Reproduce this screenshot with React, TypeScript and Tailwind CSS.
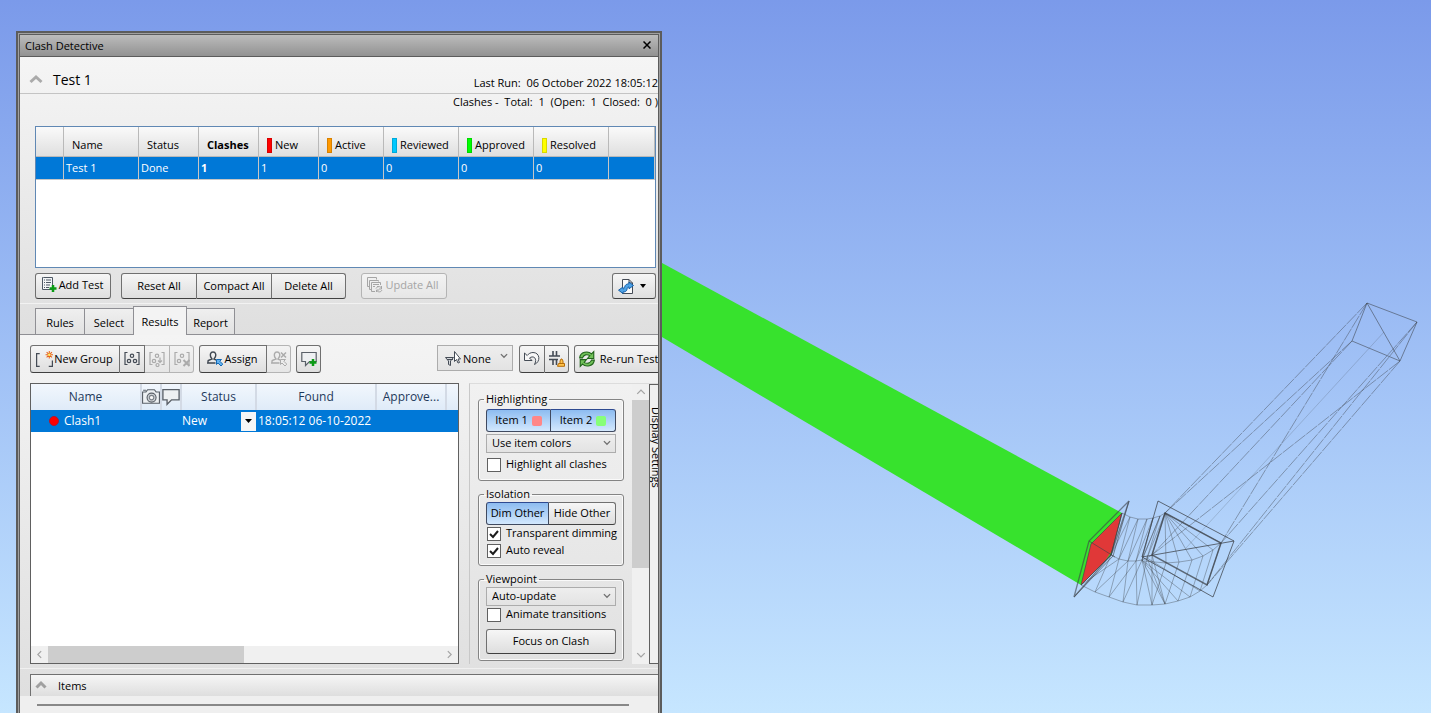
import type { ReactNode } from "react";

type Point = [number, number];

const buttonLook =
  "flex shrink-0 items-center justify-center border-[#707070] border-b-[#404040] bg-linear-to-b from-[#f6f6f6] to-[#dedede] whitespace-nowrap";
const disabledLook =
  "flex shrink-0 items-center justify-center border-[#b4b4b4] bg-linear-to-b from-[#f3f3f3] to-[#e6e6e6] whitespace-nowrap text-[#a5a5a5]";
const pressedLook =
  "flex items-center justify-center border-[#404a60] border-t-[#2f4a90] bg-linear-to-b from-[#8dbcf0] to-[#d3e8fd] whitespace-nowrap";

const testColumns = [
  { name: "", value: "", width: "w-[28px]" },
  { name: "Name", value: "Test 1", width: "w-[75px]" },
  { name: "Status", value: "Done", width: "w-[60px]" },
  { name: "Clashes", value: "1", width: "w-[60px]", bold: true },
  { name: "New", value: "1", width: "w-[60px]", chip: "bg-[#ff0000]" },
  { name: "Active", value: "0", width: "w-[65px]", chip: "bg-[#ff9900]" },
  { name: "Reviewed", value: "0", width: "w-[75px]", chip: "bg-[#00c8ff]" },
  { name: "Approved", value: "0", width: "w-[75px]", chip: "bg-[#00ff00]" },
  { name: "Resolved", value: "0", width: "w-[75px]", chip: "bg-[#ffff00]" },
  { name: "", value: "" },
];

const ductFar: Point[] = [[1367, 303], [1417, 322], [1400, 361], [1352, 341]];
const ductNear: Point[] = [[1165, 513], [1221, 543], [1207, 585], [1152, 555]];
const flangeNear: Point[] = [[1158, 501], [1234, 541], [1213, 597], [1142, 557]];
const ductEdges: [Point, Point][] = [
  [[1367, 303], [1165, 513]],
  [[1352, 341], [1165, 513]],
  [[1352, 341], [1152, 555]],
  [[1367, 303], [1221, 543]],
  [[1400, 361], [1152, 555]],
  [[1417, 322], [1221, 543]],
  [[1417, 322], [1207, 585]],
  [[1400, 361], [1207, 585]],
];
const elbowTop: Point[] = [[1122, 513], [1130, 517], [1138, 519], [1147, 519], [1153, 518], [1160, 516], [1165, 513]];
const elbowInner: Point[] = [[1111, 555], [1119, 559], [1128, 561], [1136, 561], [1142, 560], [1147, 558], [1152, 555]];
const elbowBottom: Point[] = [
  [1081, 585], [1095, 592], [1109, 597], [1123, 602], [1137, 605], [1152, 605],
  [1165, 604], [1178, 601], [1190, 597], [1200, 591], [1207, 585],
];
const elbowRight: Point[] = [[1144, 561], [1166, 563], [1179, 562], [1192, 560], [1203, 556], [1213, 550], [1221, 543]];

const toPoints = (points: Point[]) => points.map((p) => p.join(",")).join(" ");

function Scene() {
  return (
    <svg
      className="absolute inset-0 h-full w-full"
      viewBox="0 0 1431 713"
      preserveAspectRatio="xMidYMid slice"
      fill="none"
      stroke="#3c4148"
      aria-hidden="true"
    >
      <polygon points="640,251 1122,513 1111,555 1081,585 640,324" fill="#37e22d" stroke="none" />
      <polygon points="1122,513 1112,551 1105,561 1081,585 1091,544" fill="#e03838" stroke="none" />
      <g strokeOpacity="0.6">
        <polygon points="1129,501 1089,541 1074,597 1111,555" strokeWidth="1.3" />
        <polygon points="1122,513 1091,544 1081,585 1111,555" />
        <path d="M1089 541 1115 557M1129 501 1113 556 1074 597" />
      </g>
      <g strokeOpacity="0.38">
        <polyline points={toPoints(elbowTop)} />
        <polyline points={toPoints(elbowInner)} />
        <polyline points={toPoints(elbowBottom)} />
        <polyline points={toPoints(elbowRight)} />
        {elbowTop.map(([x, y], i) => (
          <path
            key={x}
            d={`M${elbowInner[i].join(" ")}L${x} ${y}L${elbowInner[Math.max(i - 1, 0)].join(" ")}`}
          />
        ))}
        {elbowBottom.slice(0, 7).map(([x, y], i) => (
          <path
            key={x}
            d={`M${elbowInner[Math.max(i - 1, 0)].join(" ")}L${x} ${y}L${elbowInner[Math.min(i + 1, 6)].join(" ")}`}
          />
        ))}
        {elbowRight.slice(1).map(([x, y], i) => (
          <path key={x} d={`M1165 513L${x} ${y}L${elbowBottom[i + 5].join(" ")}`} />
        ))}
        <path d="M1142 560 1165 604M1142 560 1178 601M1142 560 1190 597M1147 558 1200 591M1160 516 1142 560M1153 518 1142 557" />
      </g>
      <g strokeOpacity="0.75">
        <polygon points={toPoints(flangeNear)} />
        <polygon points={toPoints(ductNear)} strokeWidth="1.5" />
        <path d="M1142 557 1234 541" />
      </g>
      <g strokeOpacity="0.55">
        <polygon points={toPoints(ductFar)} />
        <path d="M1367 303 1400 361" />
      </g>
      <g strokeOpacity="0.42">
        {ductEdges.map(([a, b], i) => (
          <path key={i} d={`M${a.join(" ")}L${b.join(" ")}`} strokeDasharray="14 1" />
        ))}
        <path d="M1384 332 1186 548" strokeOpacity="0.2" />
      </g>
    </svg>
  );
}

function Icon({ children, className = "size-4" }: { children: ReactNode; className?: string }) {
  return (
    <svg className={`${className} shrink-0`} viewBox="0 0 16 16" fill="none" stroke="#444b55" aria-hidden="true">
      {children}
    </svg>
  );
}

function BracketDots({ faded = false, children }: { faded?: boolean; children?: ReactNode }) {
  return (
    <Icon>
      <g stroke={faded ? "#ababab" : "#444b55"} strokeWidth="1.200">
        <path d="M3.500 1.500H1V13.500H3.500M12.500 1.500H15V13.500H12.500" />
        <circle cx="8" cy="4.800" r="1.700" />
        <circle cx="5" cy="10" r="1.700" />
        {children ?? <circle cx="11" cy="10" r="1.700" />}
      </g>
    </Icon>
  );
}

function AssignIcon({ faded = false }: { faded?: boolean }) {
  return (
    <Icon>
      <path
        d="M6 1C3.200 1 3 4 3.800 6.200L5 8 1.200 9.500 .8 12H8.500M6 1C9 1 9.200 4.200 8.200 6.200L7 8 9 9"
        stroke={faded ? "#ababab" : "#3e4650"}
        strokeWidth="1.400"
      />
      {faded && <path d="M10 1.500l5 5M15 1.500l-5 5" stroke="#ababab" strokeWidth="1.500" />}
      <path
        d="M9.500 8.500H14.500L12.800 10.200 15.800 13.200 14 15 11 12 9.500 13.500Z"
        fill={faded ? "#ececec" : "#62b2f0"}
        stroke={faded ? "#ababab" : "#1469b4"}
      />
    </Icon>
  );
}

function CommentShape() {
  return <path d="M.8 1.500H15.200V10.500H8.500L4.500 14.500V10.500H.8Z" fill="#eef0f2" stroke="#5a6068" strokeWidth="1.200" />;
}

function PlusBadge() {
  return <path d="M12 8v7M8.500 11.500h7" stroke="#0a9a14" strokeWidth="2.500" />;
}

function Chevron({ className, d = "M4 6l4 4 4-4", weight = 2 }: { className: string; d?: string; weight?: number }) {
  return (
    <svg className={className} viewBox="0 0 16 16" fill="none" stroke="#707070" strokeWidth={weight} aria-hidden="true">
      <path d={d} />
    </svg>
  );
}

function Combo({ label, value }: { label: string; value: string }) {
  return (
    <div className="relative">
      <select
        aria-label={label}
        className="block h-[19px] w-full appearance-none border border-[#acacac] bg-linear-to-b from-[#eeeeee] to-[#e3e3e3] pl-[5px]"
      >
        <option>{value}</option>
      </select>
      <Chevron className="pointer-events-none absolute top-1 right-1 size-[10px]" d="M3 5l5 5 5-5" />
    </div>
  );
}

function Check({ label, checked = false }: { label: string; checked?: boolean }) {
  return (
    <label className="flex h-[17px] items-center gap-[5px] whitespace-nowrap">
      <span className="relative ml-px size-[14px] shrink-0">
        <input
          type="checkbox"
          defaultChecked={checked}
          className="peer block size-[14px] appearance-none border border-[#606060] bg-white"
        />
        <svg
          className="pointer-events-none absolute inset-0 hidden peer-checked:block"
          viewBox="0 0 14 14"
          fill="none"
          stroke="#1c1c1c"
          strokeWidth="2"
          aria-hidden="true"
        >
          <path d="M3 7l3 3 5-6" />
        </svg>
      </span>
      {label}
    </label>
  );
}

function Group({ title, children }: { title: string; children: ReactNode }) {
  return (
    <fieldset className="min-w-0 rounded-[3px] border border-[#848484] px-[7px] pb-1.5 shadow-[inset_0_0_0_1px_#fafafa]">
      <legend className="-ml-0.5 h-4 px-0.5 leading-4">{title}</legend>
      {children}
    </fieldset>
  );
}

function TestSummary() {
  return (
    <>
      <header className="flex h-[37px] items-center justify-between border-b border-[#c4c4c4] pl-2">
        <div className="flex items-center gap-[9px] pt-2">
          <Chevron className="size-4 opacity-55" d="M2.500 11l5.500-5 5.500 5" weight={3} />
          <h1 className="text-[14px]">Test 1</h1>
        </div>
        <p className="mt-4 whitespace-pre">Last Run:  06 October 2022 18:05:12</p>
      </header>
      <p className="h-8 text-right leading-4 whitespace-pre">Clashes -  Total:  1  (Open:  1  Closed:  0 )</p>
      <div className="mr-0.5 ml-[15px] h-[142px] border border-[#6088b4] bg-white">
        <table className="w-full table-fixed border-separate border-spacing-0 text-left">
          <thead>
            <tr className="h-[30px] bg-linear-to-b from-[#fafafa] to-[#dedede]">
              {testColumns.map((column, i) => (
                <th
                  key={i}
                  className={`${column.width ?? ""} border-r border-b border-[#b9b9b9] p-0 pt-2 pl-2 ${column.bold ? "font-bold" : "font-normal"}`}
                >
                  <span className="flex items-center gap-[3px]">
                    {column.chip && <span className={`h-[15px] w-[5px] border border-black/15 ${column.chip}`} />}
                    {column.name}
                  </span>
                </th>
              ))}
            </tr>
          </thead>
          <tbody>
            <tr className="h-[23px] bg-[#0078d7] text-white">
              {testColumns.map((column, i) => (
                <td key={i} className={`border-r border-b border-[#c6c6c6] p-0 pl-0.5 ${column.bold ? "font-bold" : ""}`}>
                  {column.value}
                </td>
              ))}
            </tr>
          </tbody>
        </table>
      </div>
      <div className="flex items-center pt-[5px] pr-0.5 pb-1 pl-[15px]">
        <button className={`${buttonLook} h-[26px] w-[76px] gap-0.5 rounded-[3px] border pr-0.5 pb-0.5`}>
          <Icon>
            <path d="M2.500 .500H11.500V12.500H1.500V.500Z" fill="#f2f4f6" stroke="#4d5864" />
            <path d="M3 3h1M5 3h5M3 5.500h1M5 5.500h5M3 8h1M5 8h4M3 10.500h1M5 10.500h3" stroke="#4d5864" />
            <PlusBadge />
          </Icon>
          Add Test
        </button>
        <div className="ml-2.5 flex">
          <button className={`${buttonLook} h-[26px] w-[76px] rounded-l-[3px] border`}>Reset All</button>
          <button className={`${buttonLook} h-[26px] w-[75px] border-y border-r`}>Compact All</button>
          <button className={`${buttonLook} h-[26px] w-[74px] rounded-r-[3px] border-y border-r`}>Delete All</button>
        </div>
        <button disabled className={`${disabledLook} ml-[15px] h-[26px] w-[86px] gap-0.5 rounded-[3px] border pr-0.5 pb-0.5`}>
          <Icon>
            <path d="M2.500 9.500H.500V.500H9.500V2.500M4.500 12.500H2.500V3.500H11.500V4.500M8 14.500H4.500V5.500H13.500V8M6 7.500h6M6 9.500h2M10 9.500h2" stroke="#a5a5a5" />
            <path d="M9 11.500c1-2.500 5-2.500 5.500 0M14.500 9v3h-2.500M15 13c-1 2.500-4.500 2.500-5.500 0M9.500 15v-2H12" stroke="#a5a5a5" />
          </Icon>
          Update All
        </button>
        <button
          aria-label="Import or export tests"
          className={`${buttonLook} ml-auto h-[26px] w-[44px] gap-1.5 rounded-[3px] border pr-1`}
        >
          <Icon>
            <path d="M4.500 15.500V1.500H11L14.500 5V15.500ZM11 1.500V5H14.500" fill="#fafafa" />
            <path
              d="M6.500 9.500C7 6.500 9 5.800 11 5.800V4L15.500 7.500 11 10.800V9C9.500 9 9.200 10 9 11.500 8.500 13.500 7 14 5 14V15.500L.500 12.200 5 9V10.800C6 10.800 6.300 10.500 6.500 9.500Z"
              fill="#4fa3e6"
              stroke="#0b559f"
              strokeWidth=".900"
            />
          </Icon>
          <svg className="w-1.5" viewBox="0 0 6 4" aria-hidden="true"><path d="M0 0h6L3 4z" /></svg>
        </button>
      </div>
    </>
  );
}

function Tabs() {
  const tabLook = "border border-[#8f8f94] bg-linear-to-b from-[#efefef] to-[#e2e2e2] pt-1";
  return (
    <nav role="tablist" className="flex h-8 items-end border-t border-b border-t-[#f2f2f2] border-b-[#8f8f94] pl-[15px]">
      <button role="tab" className={`${tabLook} h-[26px] w-[50px] border-b-0`}>Rules</button>
      <button role="tab" className={`${tabLook} h-[26px] w-[49px] border-b-0 border-l-0`}>Select</button>
      <button
        role="tab"
        aria-selected="true"
        className="-mb-px -ml-px h-[29px] w-[54px] border border-b-0 border-[#8f8f94] bg-[#f3f3f3] pt-0.5"
      >
        Results
      </button>
      <button role="tab" className={`${tabLook} h-[26px] w-[48px] border-b-0 border-l-0`}>Report</button>
    </nav>
  );
}

function ResultsToolbar() {
  return (
    <div className="flex h-7 pl-2.5">
      <button className={`${buttonLook} h-7 w-[90px] gap-px rounded-l-[3px] border pr-px`}>
        <Icon className="size-[17px]">
          <path d="M3.500 2.500H.500V14.500H3.500M12 14.500H15.500V9" strokeWidth="1.300" />
          <path d="M12.500 0v7M9 3.500h7M10 1l5 5M15 1l-5 5" stroke="#e8641b" />
          <circle cx="12.500" cy="3.500" r="1.200" fill="#fff36b" stroke="none" />
        </Icon>
        New Group
      </button>
      <button aria-label="Group clashes" className={`${buttonLook} h-7 w-[25px] border-y border-r`}>
        <BracketDots />
      </button>
      <button disabled aria-label="Remove from group" className={`${disabledLook} h-7 w-[25px] border-y border-r`}>
        <BracketDots faded>
          <path d="M11 6.500v5M9 9.500l2 2 2-2" />
          <circle cx="8.500" cy="14" r="1.500" />
        </BracketDots>
      </button>
      <button disabled aria-label="Explode group" className={`${disabledLook} h-7 w-[24px] rounded-r-[3px] border-y border-r`}>
        <BracketDots faded>
          <path d="M9.500 9l6 6M15.500 9l-6 6" strokeWidth="2" />
        </BracketDots>
      </button>

      <button className={`${buttonLook} ml-[5px] h-7 w-[68px] gap-0.5 rounded-l-[3px] border pr-0.5`}>
        <AssignIcon />
        Assign
      </button>
      <button disabled aria-label="Unassign" className={`${disabledLook} h-7 w-[24px] rounded-r-[3px] border-y border-r`}>
        <AssignIcon faded />
      </button>
      <button aria-label="Add comment" className={`${buttonLook} ml-[5px] h-7 w-[25px] rounded-[3px] border`}>
        <Icon>
          <CommentShape />
          <PlusBadge />
        </Icon>
      </button>

      <div className="relative ml-[116px] shrink-0">
        <select
          aria-label="Filter by selection"
          className="block h-[26px] w-[76px] appearance-none border border-[#acacac] bg-linear-to-b from-[#eeeeee] to-[#e3e3e3] pt-0.5 pl-[25px]"
        >
          <option>None</option>
        </select>
        <svg className="pointer-events-none absolute top-1.5 left-2 size-4" viewBox="0 0 16 16" fill="none" stroke="#444b55" aria-hidden="true">
          <path d="M.500 6.500H8.500L5.500 10V14.500L3.500 13.500V10ZM2 8.500h6" fill="#d4d8dc" />
          <path d="M9.500 .500V10.500L11.500 8.500 13 12 14.500 11.500 13 8H15.500Z" fill="#fff" />
        </svg>
        <Chevron className="pointer-events-none absolute top-1.5 right-1 size-[10px]" d="M3 5l5 5 5-5" />
      </div>

      <button aria-label="Reset" className={`${buttonLook} ml-[6px] h-7 w-[26px] rounded-l-[3px] border`}>
        <Icon>
          <path d="M.500 2V9.500H8L5.500 7C9 4.500 12.500 6.500 11.500 11L10.500 13.500C17 10.500 16 1.500 9 1.500 6.500 1.500 4.500 2.800 3.200 4.500Z" fill="#f7f7f7" />
        </Icon>
      </button>
      <button aria-label="Compact clashes" className={`${buttonLook} h-7 w-[24px] rounded-r-[3px] border-y border-r`}>
        <Icon>
          <path d="M0 5H11M0 8.500H9M4 0V4.500M7.500 0V4.500M4 9V14M7.500 9V14" strokeWidth="1.600" />
          <path d="M9.500 12.500h6v2.800H8.500ZM11 12.500V10l1-2h1l1 2v2.500" fill="#ffc34d" stroke="#b66d08" />
        </Icon>
      </button>
      <button className={`${buttonLook} ml-[5px] h-7 w-[90px] gap-1 rounded-[3px] border pr-0.5`}>
        <Icon className="size-[18px]">
          <path d="M1.500 7C2 1.500 9 .500 12 3.500L14 1.500V7.500H8.500L10.500 5C8 3.500 5 4 4 7Z" fill="#72c25a" stroke="#21651c" />
          <path d="M14.500 9C14 14.500 7 15.500 4 12.500L2 14.500V8.500H7.500L5.500 11C8 12.500 11 12 12 9Z" fill="#72c25a" stroke="#21651c" />
        </Icon>
        Re-run Test
      </button>
    </div>
  );
}

function ClashList() {
  const headLook = "border-r-2 border-[#d3dae5] p-0 text-center font-normal";
  return (
    <div className="flex h-[281px] w-[429px] shrink-0 flex-col border border-[#606060] bg-white text-[12px]">
      <table className="w-full table-fixed border-separate border-spacing-0">
        <thead>
          <tr className="h-[26px] bg-linear-to-b from-[#f2f7fd] to-[#dfebf8] text-[#1e395b]">
            <th className={`${headLook} w-[111px]`}>Name</th>
            <th className={`${headLook} w-[20px]`} aria-label="Viewpoint">
              <Icon className="mx-auto size-[18px]">
                <path d="M.500 3.500H3.500L5 1.500H11L12.500 3.500H15.500V13.500H.500ZM1 2h2.500" fill="#edf0f3" stroke="#5a6068" />
                <circle cx="8.500" cy="8.500" r="4" fill="#d2d6da" stroke="#5a6068" />
                <circle cx="8.500" cy="8.500" r="2" fill="#f8f8f8" stroke="#7c8289" />
              </Icon>
            </th>
            <th className={`${headLook} w-[20px]`} aria-label="Comments">
              <Icon className="mx-auto size-[18px]"><CommentShape /></Icon>
            </th>
            <th className={`${headLook} w-[75px]`}>Status</th>
            <th className={`${headLook} w-[120px]`}>Found</th>
            <th className={`${headLook} w-[70px]`}>Approve...</th>
            <th className="p-0" />
          </tr>
        </thead>
        <tbody>
          <tr className="h-[22px] bg-[#0078d7] text-white">
            <td className="p-0">
              <span className="flex items-center gap-[5px] pl-[18px]">
                <span className="size-2.5 rounded-full border border-[#b01830] bg-[#ff0000]" />
                Clash1
              </span>
            </td>
            <td className="p-0" />
            <td className="p-0" />
            <td className="p-0">
              <span className="flex items-center justify-between pr-px">
                New
                <button aria-label="Change status" className="flex h-[19px] w-[15px] items-center justify-center bg-[#f6f6f6]">
                  <svg className="w-[7px]" viewBox="0 0 7 4" aria-hidden="true"><path d="M0 0h7L3.500 4z" /></svg>
                </button>
              </span>
            </td>
            <td className="p-0 pl-px whitespace-nowrap">18:05:12 06-10-2022</td>
            <td className="p-0" />
            <td className="p-0" />
          </tr>
        </tbody>
      </table>
      <div className="mt-auto flex h-[17px] items-center bg-[#f0f0f0]">
        <Chevron className="mx-1 size-[9px] opacity-60" d="M11 2L5 8l6 6" />
        <div className="h-full w-[196px] bg-[#cdcdcd]" />
        <Chevron className="mr-1 ml-auto size-[9px] opacity-60" d="M5 2l6 6-6 6" />
      </div>
    </div>
  );
}

function DisplaySettings() {
  return (
    <div className="flex h-[281px] min-w-0 grow border-t border-l border-[#dcdcdc] border-l-[#c8c8c8]">
      <div className="flex w-[154px] shrink-0 flex-col gap-[5px] pt-[7px] pl-2">
        <Group title="Highlighting">
          <div className="mt-0.5 flex">
            <button aria-pressed="true" className={`${pressedLook} h-[23px] w-[65px] gap-1 rounded-l-[3px] border`}>
              Item 1 <span className="size-2.5 rounded-xs bg-[#ff8787]" />
            </button>
            <button aria-pressed="true" className={`${pressedLook} h-[23px] grow gap-1 rounded-r-[3px] border-y border-r`}>
              Item 2 <span className="size-2.5 rounded-xs bg-[#87ff78]" />
            </button>
          </div>
          <div className="my-0.5"><Combo label="Highlight colors" value="Use item colors" /></div>
          <div className="py-px"><Check label="Highlight all clashes" /></div>
        </Group>
        <Group title="Isolation">
          <div className="flex">
            <button aria-pressed="true" className={`${pressedLook} h-[23px] w-[63px] rounded-l-[3px] border`}>Dim Other</button>
            <button className={`${buttonLook} h-[23px] grow rounded-r-[3px] border-y border-r`}>Hide Other</button>
          </div>
          <Check label="Transparent dimming" checked />
          <Check label="Auto reveal" checked />
        </Group>
        <Group title="Viewpoint">
          <Combo label="Viewpoint behavior" value="Auto-update" />
          <Check label="Animate transitions" />
          <button className={`${buttonLook} mt-1.5 h-[25px] w-full rounded-[3px] border`}>Focus on Clash</button>
        </Group>
      </div>
      <div className="ml-2 flex w-[17px] shrink-0 flex-col items-center bg-[#f0f0f0]">
        <Chevron className="my-[3px] size-2.5 opacity-60" d="M2 11l6-6 6 6" />
        <div className="h-[168px] w-full bg-[#cdcdcd]" />
        <Chevron className="mt-auto mb-1 size-2.5 opacity-60" d="M2 5l6 6 6-6" />
      </div>
      <div className="min-w-0 grow overflow-hidden border border-r-0 border-[#606060] bg-[#f0f0f0] pt-[22px] pl-px">
        <span className="block leading-none whitespace-nowrap [writing-mode:vertical-rl]">Display Settings</span>
      </div>
    </div>
  );
}

function App() {
  return (
    <main className="relative flex h-screen overflow-hidden bg-linear-to-b from-[#7b9aea] to-[#c6e6ff] pt-[31px] pl-4 font-['Open_Sans','Noto_Sans',sans-serif] text-[11px] text-black">
      <Scene />
      <section className="relative w-[646px] shrink-0 border-2 border-b-0 border-[#5c5c5c] bg-[#a0a0a0] pt-px pr-px pl-px">
        <div className="flex h-full flex-col overflow-hidden border border-b-0 border-[#5c5c5c] bg-[#efefef]">
          <div className="flex h-[22px] shrink-0 items-center justify-between border-b border-[#5c5c5c] bg-linear-to-b from-[#bcbcbc] to-[#929292] pr-[7px] pl-[5px]">
            <h2 className="pt-0.5">Clash Detective</h2>
            <button aria-label="Close" className="pb-0.5">
              <svg className="size-2" viewBox="0 0 8 8" stroke="#000" strokeWidth="1.500" aria-hidden="true">
                <path d="M.500 .500l7 7M7.500 .500l-7 7" />
              </svg>
            </button>
          </div>
          <div className="shrink-0 bg-linear-to-b from-[#f5f5f5] to-[#dfdfdf]">
            <TestSummary />
            <Tabs />
          </div>
          <div className="shrink-0 bg-linear-to-b from-[#f4f4f4] to-[#dfdfdf] pt-2.5">
            <ResultsToolbar />
            <div className="mt-2.5 flex gap-2.5 pl-2.5">
              <ClashList />
              <DisplaySettings />
            </div>
            <div className="mt-1 border-t border-[#f0f0f0] pt-[5px] pl-2.5">
              <button className="flex h-[22px] w-full items-center gap-[11px] border-t border-l border-[#707070] bg-linear-to-b from-[#f6f6f6] to-[#dedede] pt-px pl-1">
                <Chevron className="size-3 opacity-60" d="M2 10l6-6 6 6" weight={4} />
                Items
              </button>
            </div>
          </div>
          <hr className="mt-2 mr-[29px] ml-[17px] border-t-2 border-[#888888]" />
        </div>
      </section>
    </main>
  );
}

export default App;
